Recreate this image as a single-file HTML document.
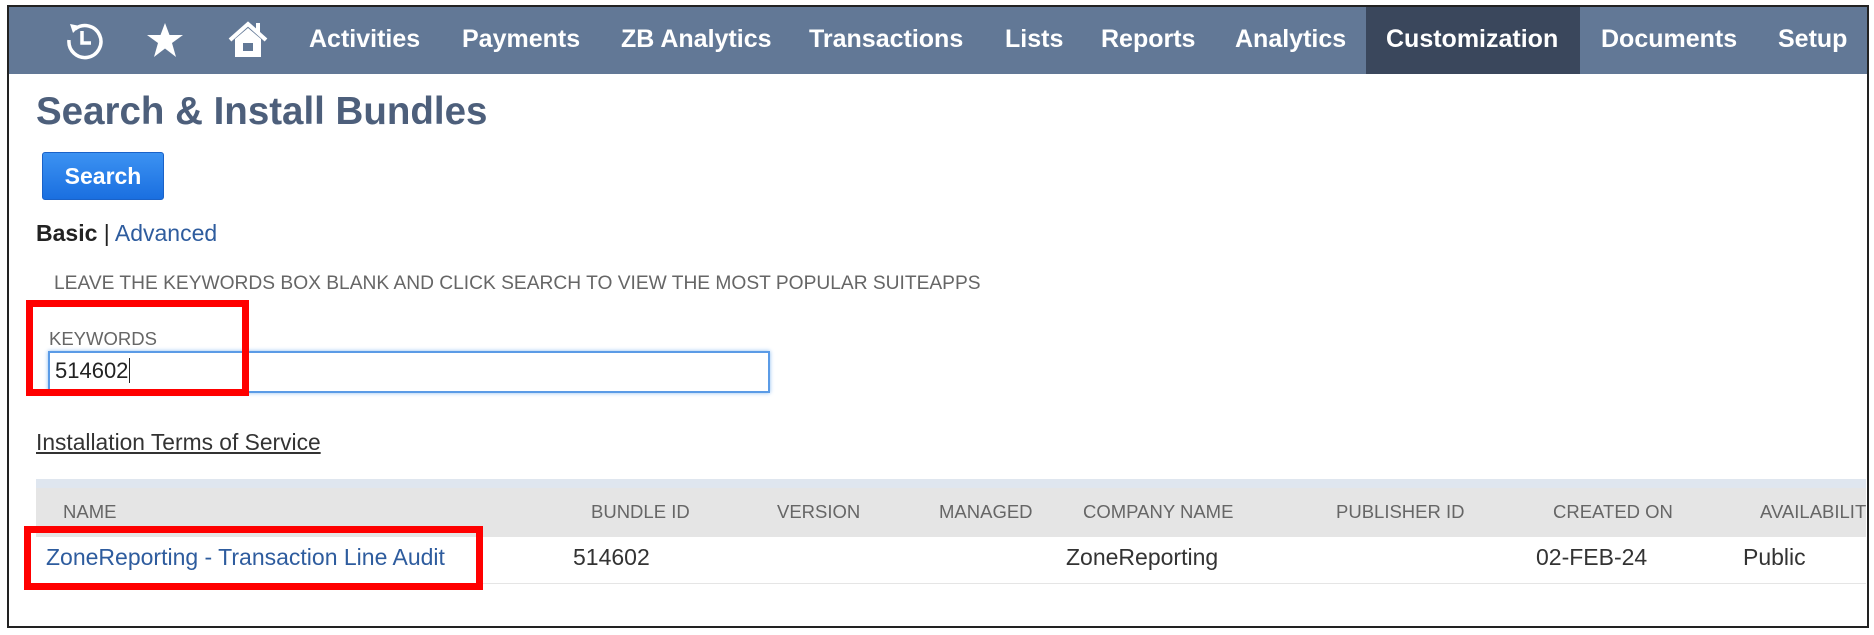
<!DOCTYPE html>
<html><head><meta charset="utf-8"><style>
*{margin:0;padding:0;box-sizing:border-box}
body{width:1874px;height:635px;background:#fff;font-family:"Liberation Sans",sans-serif;position:relative;overflow:hidden}
.frame{position:absolute;left:7px;top:5px;width:1862px;height:623px;border:2px solid #222}
.nav{position:absolute;left:9px;top:7px;width:1858px;height:67px;background:#627896}
.act{position:absolute;left:1366px;top:7px;width:214px;height:67px;background:#3a475c}
.ni{position:absolute;top:25px;color:#fff;font-weight:bold;font-size:25px}
.abs{position:absolute;white-space:nowrap}
.th{position:absolute;top:501px;font-size:18.5px;color:#666}
.td{position:absolute;top:544px;font-size:23px;color:#333}
</style></head><body>
<div class="frame"></div>
<div class="nav"></div>
<div class="act"></div>
<svg class="abs" style="left:64px;top:20px" width="40" height="40" viewBox="0 0 40 40">
<path d="M11 9 A16 16 0 1 1 5 20" fill="none" stroke="#fff" stroke-width="3.5"/>
<path d="M6 4 L16 6 L9 13 Z" fill="#fff"/>
<path d="M18 11 V23 H27" fill="none" stroke="#fff" stroke-width="3.5"/>
</svg>
<svg class="abs" style="left:146px;top:22px" width="38" height="36" viewBox="0 0 38 36">
<path d="M19 1 L23.5 13 L37 13 L26 21 L30 35 L19 26.5 L8 35 L12 21 L1 13 L14.5 13 Z" fill="#fff"/>
</svg>
<svg class="abs" style="left:227px;top:20px" width="42" height="38" viewBox="0 0 42 38">
<path d="M3 20 L21 4 L39 20" fill="none" stroke="#fff" stroke-width="4"/>
<rect x="29" y="3" width="4" height="9" fill="#fff"/>
<path d="M8 19 L21 8 L34 19 V37 H8 Z M16 23 V31 H26 V23 Z" fill="#fff" fill-rule="evenodd"/>
</svg>
<div class="ni" style="left:309px">Activities</div>
<div class="ni" style="left:462px">Payments</div>
<div class="ni" style="left:621px">ZB Analytics</div>
<div class="ni" style="left:809px">Transactions</div>
<div class="ni" style="left:1005px">Lists</div>
<div class="ni" style="left:1101px">Reports</div>
<div class="ni" style="left:1235px">Analytics</div>
<div class="ni" style="left:1386px">Customization</div>
<div class="ni" style="left:1601px">Documents</div>
<div class="ni" style="left:1778px">Setup</div>

<div class="abs" style="left:36px;top:90px;font-size:38.5px;font-weight:bold;color:#4d5f7b">Search &amp; Install Bundles</div>
<div class="abs" style="left:42px;top:152px;width:122px;height:48px;border-radius:3px;background:linear-gradient(#3c92f2,#1a6fe0);border:1px solid #1a62c8;color:#fff;font-weight:bold;font-size:23px;text-align:center;line-height:46px">Search</div>
<div class="abs" style="left:36px;top:220px;font-size:23px;color:#222"><b>Basic</b> | <span style="color:#2e5c9e">Advanced</span></div>
<div class="abs" style="left:54px;top:273px;font-size:19.2px;color:#666">LEAVE THE KEYWORDS BOX BLANK AND CLICK SEARCH TO VIEW THE MOST POPULAR SUITEAPPS</div>
<div class="abs" style="left:49px;top:328px;font-size:18.5px;color:#666">KEYWORDS</div>
<div class="abs" style="left:48px;top:351px;width:722px;height:42px;border:2px solid #5b9be6;box-shadow:0 0 4px #8cbcf0"></div>
<div class="abs" style="left:55px;top:358px;font-size:22px;color:#222">514602<span style="border-left:1px solid #222;margin-left:1px"></span></div>
<div class="abs" style="left:26px;top:300px;width:223px;height:96px;border:7px solid #f00"></div>
<div class="abs" style="left:36px;top:429px;font-size:22.8px;color:#333;text-decoration:underline">Installation Terms of Service</div>

<div class="abs" style="left:36px;top:479px;width:1830px;height:9px;background:#dfe6ef"></div>
<div class="abs" style="left:36px;top:488px;width:1830px;height:49px;background:#e5e5e5"></div>
<div class="abs" style="left:36px;top:583px;width:1830px;height:1px;background:#e5e5e5"></div>
<div class="th" style="left:63px">NAME</div>
<div class="th" style="left:591px">BUNDLE ID</div>
<div class="th" style="left:777px">VERSION</div>
<div class="th" style="left:939px">MANAGED</div>
<div class="th" style="left:1083px">COMPANY NAME</div>
<div class="th" style="left:1336px">PUBLISHER ID</div>
<div class="th" style="left:1553px">CREATED ON</div>
<div class="th" style="left:1760px;width:106px;overflow:hidden">AVAILABILITY</div>
<div class="td" style="left:46px;color:#2e5c9e">ZoneReporting - Transaction Line Audit</div>
<div class="td" style="left:573px">514602</div>
<div class="td" style="left:1066px">ZoneReporting</div>
<div class="td" style="left:1536px">02-FEB-24</div>
<div class="td" style="left:1743px">Public</div>
<div class="abs" style="left:24px;top:526px;width:459px;height:64px;border:7px solid #f00"></div>
</body></html>
